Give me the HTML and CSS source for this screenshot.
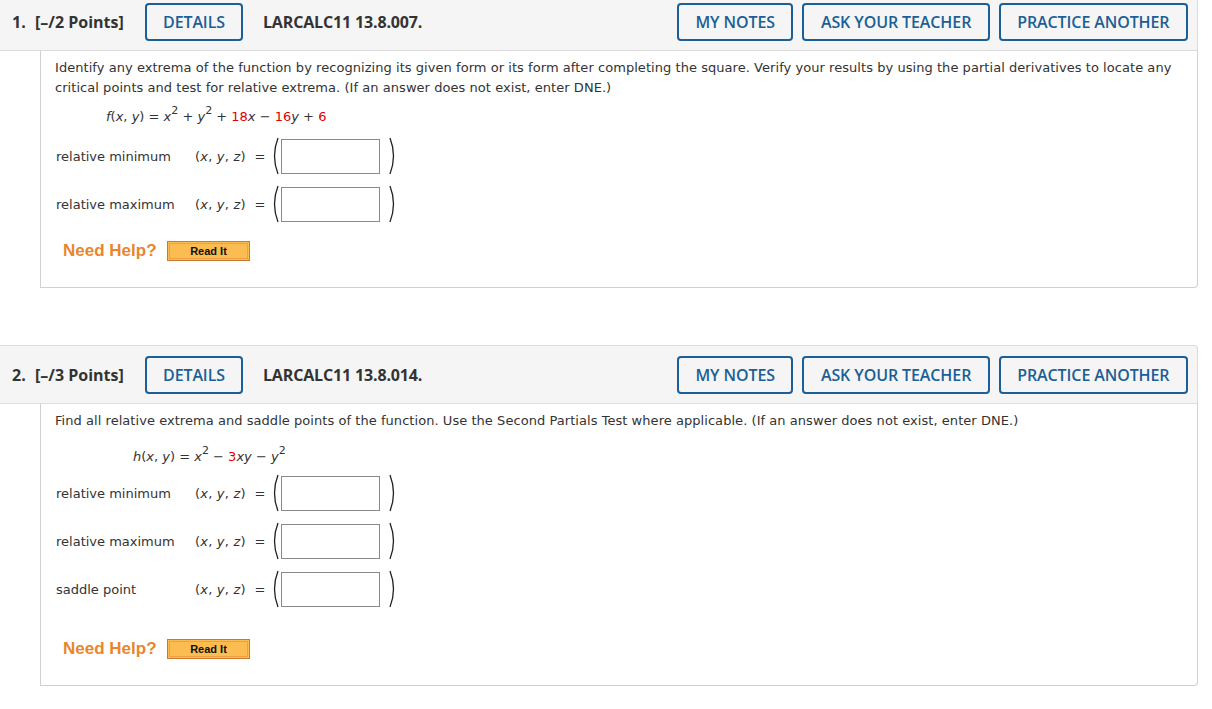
FILE: index.html
```html
<!DOCTYPE html>
<html>
<head>
<meta charset="utf-8">
<link rel="stylesheet" href="styles.css">
</head>
<body>
<div class="page">
  <div class="question">
    <div class="qhead">
      <span class="qnum">1.</span>
      <span class="qpts">[–/2 Points]</span>
      <span class="btn details">DETAILS</span>
      <span class="qid">LARCALC11 13.8.007.</span>
      <span class="spacer"></span>
      <span class="btn">MY NOTES</span>
      <span class="btn">ASK YOUR TEACHER</span>
      <span class="btn">PRACTICE ANOTHER</span>
    </div>
    <div class="qbody">
      <p class="prompt">Identify any extrema of the function by recognizing its given form or its form after completing the square. Verify your results by using the partial derivatives to locate any<br>critical points and test for relative extrema. (If an answer does not exist, enter DNE.)</p>
      <div class="func f1"><i>f</i>(<i>x</i>, <i>y</i>) = <i>x</i><sup>2</sup> + <i>y</i><sup>2</sup> + <span class="red">18</span><i>x</i> − <span class="red">16</span><i>y</i> + <span class="red">6</span></div>
      <div class="rows">
        <div class="row">
          <span class="lbl">relative minimum</span>
          <span class="xyz">(<i>x</i>, <i>y</i>, <i>z</i>)&nbsp; =</span>
          <svg class="paren" width="10" height="38" viewBox="0 0 10 38"><path d="M8 1 Q1 19 8 37" fill="none" stroke="#222" stroke-width="1.3"/></svg>
          <span class="box"></span>
          <svg class="paren rp" width="10" height="38" viewBox="0 0 10 38"><path d="M2 1 Q9 19 2 37" fill="none" stroke="#222" stroke-width="1.3"/></svg>
        </div>
        <div class="row">
          <span class="lbl">relative maximum</span>
          <span class="xyz">(<i>x</i>, <i>y</i>, <i>z</i>)&nbsp; =</span>
          <svg class="paren" width="10" height="38" viewBox="0 0 10 38"><path d="M8 1 Q1 19 8 37" fill="none" stroke="#222" stroke-width="1.3"/></svg>
          <span class="box"></span>
          <svg class="paren rp" width="10" height="38" viewBox="0 0 10 38"><path d="M2 1 Q9 19 2 37" fill="none" stroke="#222" stroke-width="1.3"/></svg>
        </div>
      </div>
      <div class="help">
        <span class="needhelp">Need Help?</span>
        <span class="readit"><span>Read It</span></span>
      </div>
    </div>
  </div>

  <div class="question q2">
    <div class="qhead">
      <span class="qnum">2.</span>
      <span class="qpts">[–/3 Points]</span>
      <span class="btn details">DETAILS</span>
      <span class="qid">LARCALC11 13.8.014.</span>
      <span class="spacer"></span>
      <span class="btn">MY NOTES</span>
      <span class="btn">ASK YOUR TEACHER</span>
      <span class="btn">PRACTICE ANOTHER</span>
    </div>
    <div class="qbody">
      <p class="prompt">Find all relative extrema and saddle points of the function. Use the Second Partials Test where applicable. (If an answer does not exist, enter DNE.)</p>
      <div class="func f2"><i>h</i>(<i>x</i>, <i>y</i>) = <i>x</i><sup>2</sup> − <span class="red">3</span><i>xy</i> − <i>y</i><sup>2</sup></div>
      <div class="rows">
        <div class="row">
          <span class="lbl">relative minimum</span>
          <span class="xyz">(<i>x</i>, <i>y</i>, <i>z</i>)&nbsp; =</span>
          <svg class="paren" width="10" height="38" viewBox="0 0 10 38"><path d="M8 1 Q1 19 8 37" fill="none" stroke="#222" stroke-width="1.3"/></svg>
          <span class="box"></span>
          <svg class="paren rp" width="10" height="38" viewBox="0 0 10 38"><path d="M2 1 Q9 19 2 37" fill="none" stroke="#222" stroke-width="1.3"/></svg>
        </div>
        <div class="row">
          <span class="lbl">relative maximum</span>
          <span class="xyz">(<i>x</i>, <i>y</i>, <i>z</i>)&nbsp; =</span>
          <svg class="paren" width="10" height="38" viewBox="0 0 10 38"><path d="M8 1 Q1 19 8 37" fill="none" stroke="#222" stroke-width="1.3"/></svg>
          <span class="box"></span>
          <svg class="paren rp" width="10" height="38" viewBox="0 0 10 38"><path d="M2 1 Q9 19 2 37" fill="none" stroke="#222" stroke-width="1.3"/></svg>
        </div>
        <div class="row">
          <span class="lbl">saddle point</span>
          <span class="xyz">(<i>x</i>, <i>y</i>, <i>z</i>)&nbsp; =</span>
          <svg class="paren" width="10" height="38" viewBox="0 0 10 38"><path d="M8 1 Q1 19 8 37" fill="none" stroke="#222" stroke-width="1.3"/></svg>
          <span class="box"></span>
          <svg class="paren rp" width="10" height="38" viewBox="0 0 10 38"><path d="M2 1 Q9 19 2 37" fill="none" stroke="#222" stroke-width="1.3"/></svg>
        </div>
      </div>
      <div class="help h2">
        <span class="needhelp">Need Help?</span>
        <span class="readit"><span>Read It</span></span>
      </div>
    </div>
  </div>
</div>
</body>
</html>
```

FILE: styles.css
```css
* { box-sizing: border-box; }
html, body { margin: 0; padding: 0; background: #fff; }
body { font-family: "DejaVu Sans", Verdana, sans-serif; color: #333; overflow: hidden; }

.page { margin-top: -8px; width: 1198px; }

.question { width: 1198px; }
.q2 { margin-top: 57px; }

.qhead {
  display: flex;
  align-items: center;
  height: 59px;
  background: #f5f5f5;
  border-top: 1px solid #dcdcdc;
  border-bottom: 1px solid #dcdcdc;
  border-right: 1px solid #dcdcdc;
  border-radius: 0 4px 0 0;
  padding: 0 9px 0 12px;
  font-family: "Open Sans", sans-serif;
  font-weight: 700;
  font-size: 16px;
  color: #333;
}
.qnum { width: 23px; }
.qpts { width: 110px; }
.qid { margin-left: 20px; letter-spacing: -0.15px; }
.spacer { flex: 1; }
.btn {
  display: inline-flex;
  align-items: center;
  height: 38px;
  padding: 0 16.5px;
  border: 2px solid #1c5f96;
  border-radius: 4px;
  color: #1c5f96;
  font-weight: 600;
  font-size: 16px;
  margin-left: 9px;
  letter-spacing: -0.1px;
}
.btn.details { margin-left: 0; padding: 0 16px; }

.qbody {
  margin-left: 40px;
  border: 1px solid #d0d0d0;
  border-top: none;
  border-radius: 0 0 4px 0;
  padding: 7px 14px 26px 14px;
  font-size: 13px;
  color: #333;
}
.prompt { margin: 0; line-height: 20px; white-space: nowrap; letter-spacing: 0.05px; }

.func { line-height: 20px; height: 20px; }
.f1 { margin: 9px 0 0 51px; }
.f2 { margin: 16px 0 0 78px; }
.func i, .xyz i { font-style: italic; }
sup { font-size: 11px; vertical-align: 7px; line-height: 0; }
.red { color: #e00000; }

.rows { display: flex; flex-direction: column; gap: 12px; margin-top: 8px; }
.f1 + .rows { margin-top: 11px; }
.row { display: flex; align-items: center; height: 36px; }
.lbl { width: 140px; padding-left: 1px; }
.xyz { width: 75px; letter-spacing: 0.2px; }
.paren { display: block; margin-right: 1px; }
.box { width: 99px; height: 35px; border: 1px solid #8a8a8a; background: #fff; }
.rp { margin-left: 8px; }

.help { display: flex; align-items: center; margin-top: 19px; padding-left: 8px; }
.h2 { margin-top: 32px; }
.needhelp {
  font-family: "Liberation Sans", Arial, sans-serif;
  font-weight: 700;
  font-size: 17px;
  color: #e9862d;
  width: 104px;
}
.readit {
  display: inline-block;
  width: 83px;
  height: 20px;
  border: 1px solid #c87a2e;
  background: #fbbd52;
  padding: 1px;
}
.readit span {
  display: flex;
  align-items: center;
  justify-content: center;
  height: 100%;
  border: 1px solid #f0a040;
  font-family: "Liberation Sans", Arial, sans-serif;
  font-weight: 700;
  font-size: 11px;
  color: #111;
}
```
